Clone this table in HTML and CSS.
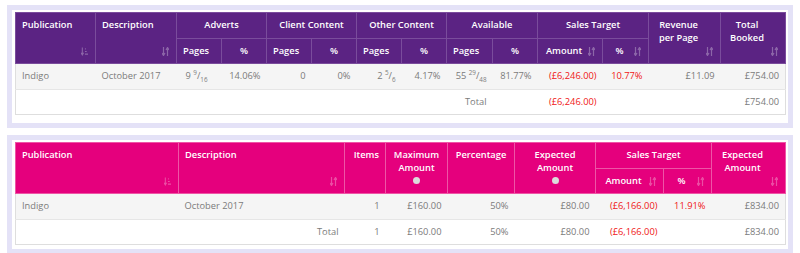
FILE: index.html
```html
<!DOCTYPE html>
<html>
<head>
<meta charset="utf-8">
<link rel="stylesheet" href="styles.css">
</head>
<body>
<div class="panel">
  <table class="grid purple">
    <colgroup>
      <col class="w80"><col class="w81"><col class="w45"><col class="w45"><col class="w45"><col class="w45"><col class="w45"><col class="w45"><col class="w46"><col class="w45"><col class="w65"><col class="w46"><col class="w72"><col class="w65">
    </colgroup>
    <thead>
      <tr>
        <th rowspan="2" class="l">Publication<svg class="sort" viewBox="0 0 8 9"><path d="M1.5 0V8M0 6L1.5 8.5L3 6" /><path d="M4.5 1.5H5.5M4.5 4.5H6.5M4.5 7.5H8" /></svg></th>
        <th rowspan="2" class="l">Description<svg class="sort" viewBox="0 0 7 9"><path d="M1.5 0V8M0 6L1.5 8.5L3 6" /><path d="M5.5 1V9M4 3L5.5 0.5L7 3" /></svg></th>
        <th colspan="2" class="c">Adverts</th>
        <th colspan="2" class="c">Client Content</th>
        <th colspan="2" class="c">Other Content</th>
        <th colspan="2" class="c">Available</th>
        <th colspan="2" class="c">Sales Target</th>
        <th rowspan="2" class="s">Revenue<br>per Page<svg class="sort" viewBox="0 0 7 9"><path d="M1.5 0V8M0 6L1.5 8.5L3 6" /><path d="M5.5 1V9M4 3L5.5 0.5L7 3" /></svg></th>
        <th rowspan="2" class="s">Total<br>Booked<svg class="sort" viewBox="0 0 7 9"><path d="M1.5 0V8M0 6L1.5 8.5L3 6" /><path d="M5.5 1V9M4 3L5.5 0.5L7 3" /></svg></th>
      </tr>
      <tr>
        <th class="l">Pages</th><th class="c">%</th>
        <th class="l">Pages</th><th class="c">%</th>
        <th class="l">Pages</th><th class="c">%</th>
        <th class="l">Pages</th><th class="c">%</th>
        <th class="s">Amount<svg class="sort" viewBox="0 0 7 9"><path d="M1.5 0V8M0 6L1.5 8.5L3 6" /><path d="M5.5 1V9M4 3L5.5 0.5L7 3" /></svg></th>
        <th class="s">%<svg class="sort" viewBox="0 0 7 9"><path d="M1.5 0V8M0 6L1.5 8.5L3 6" /><path d="M5.5 1V9M4 3L5.5 0.5L7 3" /></svg></th>
      </tr>
    </thead>
    <tbody>
      <tr class="odd">
        <td class="l">Indigo</td>
        <td class="l">October 2017</td>
        <td class="r padx">9 <sup>9</sup>/<sub>16</sub></td>
        <td class="r">14.06%</td>
        <td class="r">0</td>
        <td class="r">0%</td>
        <td class="r">2 <sup>5</sup>/<sub>6</sub></td>
        <td class="r">4.17%</td>
        <td class="r">55 <sup>29</sup>/<sub>48</sub></td>
        <td class="r">81.77%</td>
        <td class="r neg">(£6,246.00)</td>
        <td class="r neg">10.77%</td>
        <td class="r">£11.09</td>
        <td class="r">£754.00</td>
      </tr>
      <tr>
        <td colspan="9" class="r">Total</td>
        <td></td>
        <td class="r neg">(£6,246.00)</td>
        <td></td>
        <td></td>
        <td class="r">£754.00</td>
      </tr>
    </tbody>
  </table>
</div>

<div class="panel panel-b">
  <table class="grid pink">
    <colgroup>
      <col class="w163"><col class="w166"><col class="w41"><col class="w62"><col class="w67"><col class="w81"><col class="w68"><col class="w48"><col class="w74">
    </colgroup>
    <thead>
      <tr>
        <th rowspan="2" class="l">Publication<svg class="sort" viewBox="0 0 8 9"><path d="M1.5 0V8M0 6L1.5 8.5L3 6" /><path d="M4.5 1.5H5.5M4.5 4.5H6.5M4.5 7.5H8" /></svg></th>
        <th rowspan="2" class="l">Description<svg class="sort" viewBox="0 0 7 9"><path d="M1.5 0V8M0 6L1.5 8.5L3 6" /><path d="M5.5 1V9M4 3L5.5 0.5L7 3" /></svg></th>
        <th rowspan="2" class="r">Items</th>
        <th rowspan="2" class="c">Maximum<br>Amount<span class="dot"></span></th>
        <th rowspan="2" class="c">Percentage</th>
        <th rowspan="2" class="c">Expected<br>Amount<span class="dot"></span></th>
        <th colspan="2" class="c">Sales Target</th>
        <th rowspan="2" class="s">Expected<br>Amount<svg class="sort" viewBox="0 0 7 9"><path d="M1.5 0V8M0 6L1.5 8.5L3 6" /><path d="M5.5 1V9M4 3L5.5 0.5L7 3" /></svg></th>
      </tr>
      <tr>
        <th class="s">Amount<svg class="sort" viewBox="0 0 7 9"><path d="M1.5 0V8M0 6L1.5 8.5L3 6" /><path d="M5.5 1V9M4 3L5.5 0.5L7 3" /></svg></th>
        <th class="s">%<svg class="sort" viewBox="0 0 7 9"><path d="M1.5 0V8M0 6L1.5 8.5L3 6" /><path d="M5.5 1V9M4 3L5.5 0.5L7 3" /></svg></th>
      </tr>
    </thead>
    <tbody>
      <tr class="odd">
        <td class="l">Indigo</td>
        <td class="l">October 2017</td>
        <td class="r">1</td>
        <td class="r">£160.00</td>
        <td class="r">50%</td>
        <td class="r">£80.00</td>
        <td class="r neg">(£6,166.00)</td>
        <td class="r neg">11.91%</td>
        <td class="r">£834.00</td>
      </tr>
      <tr>
        <td></td>
        <td class="r">Total</td>
        <td class="r">1</td>
        <td class="r">£160.00</td>
        <td class="r">50%</td>
        <td class="r">£80.00</td>
        <td class="r neg">(£6,166.00)</td>
        <td></td>
        <td class="r">£834.00</td>
      </tr>
    </tbody>
  </table>
</div>
</body>
</html>
```
FILE: styles.css
```css
body {
  margin: 5px 0 0 7px;
  font-family: "Open Sans", "Liberation Sans", sans-serif;
  font-size: 9.3px;
  color: #7b7b7b;
  background: #fff;
}

.panel {
  width: 771px;
  border: 5px solid #e4e2f7;
  padding: 2px 2px 8px 3px;
  background: #fff;
}

.panel-b {
  margin-top: 7px;
  padding-bottom: 4px;
}

.grid {
  width: 771px;
  table-layout: fixed;
  border-collapse: collapse;
  border: 1px solid #dedede;
}

.w41 { width: 41px; }
.w45 { width: 45px; }
.w46 { width: 46px; }
.w48 { width: 48px; }
.w62 { width: 62px; }
.w65 { width: 65px; }
.w67 { width: 67px; }
.w68 { width: 68px; }
.w72 { width: 72px; }
.w74 { width: 74px; }
.w80 { width: 80px; }
.w81 { width: 81px; }
.w163 { width: 163px; }
.w166 { width: 166px; }

th {
  position: relative;
  color: #fff;
  font-weight: 600;
  padding: 6px;
  line-height: 12.6px;
  vertical-align: top;
  white-space: nowrap;
}

.purple th {
  background: #5b2383;
  border: 1px solid #7a4c9c;
}

.pink th {
  background: #e5007d;
  border: 1px solid #ee55a6;
}

th.l { text-align: left; }
th.c { text-align: center; }
th.r { text-align: right; }
th.s { text-align: center; padding-right: 18px; }

.sort {
  position: absolute;
  right: 7px;
  bottom: 7px;
  width: 7px;
  height: 9px;
  fill: none;
  stroke: #fff;
  stroke-width: 1.2;
  opacity: 0.3;
}

.dot {
  display: block;
  width: 7px;
  height: 7px;
  margin: 3px auto 2.6px;
  border-radius: 50%;
  background: #dcdcdc;
}

td {
  padding: 6px;
  line-height: 12.4px;
  border-top: 1px solid #e6e6e6;
  white-space: nowrap;
}

tr.odd td {
  background: #f5f5f5;
}

td.l { text-align: left; }
td.r { text-align: right; }
td.padx { padding-right: 14px; }
td.neg { color: #f01616; }

sup, sub {
  font-size: 6.3px;
  line-height: 0;
}
```
